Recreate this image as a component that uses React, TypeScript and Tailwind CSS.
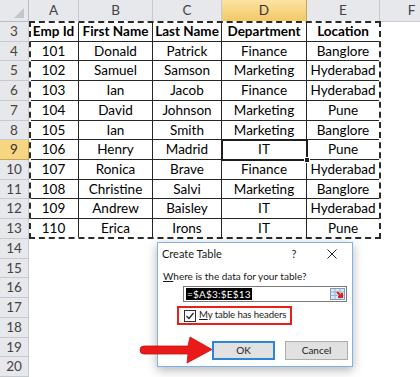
const COLS = ['A', 'B', 'C', 'D', 'E', 'F'];

const TABLE: string[][] = [
  ['Emp Id', 'First Name', 'Last Name', 'Department', 'Location'],
  ['101', 'Donald', 'Patrick', 'Finance', 'Banglore'],
  ['102', 'Samuel', 'Samson', 'Marketing', 'Hyderabad'],
  ['103', 'Ian', 'Jacob', 'Finance', 'Hyderabad'],
  ['104', 'David', 'Johnson', 'Marketing', 'Pune'],
  ['105', 'Ian', 'Smith', 'Marketing', 'Banglore'],
  ['106', 'Henry', 'Madrid', 'IT', 'Pune'],
  ['107', 'Ronica', 'Brave', 'Finance', 'Hyderabad'],
  ['108', 'Christine', 'Salvi', 'Marketing', 'Banglore'],
  ['109', 'Andrew', 'Baisley', 'IT', 'Hyderabad'],
  ['110', 'Erica', 'Irons', 'IT', 'Pune'],
];

const ROW_NUMBERS = Array.from({ length: 18 }, (_, i) => i + 3);

function ColumnHeader() {
  return (
    <>
      <div className="relative bg-[#e6e8eb] border-r border-b border-[#b9bdc3]">
        <svg className="absolute right-[3px] bottom-[3px]" width="11" height="10">
          <polygon points="10,0 10,10 0,10" fill="#c3c6ca" />
        </svg>
      </div>
      {COLS.map((c) => (
        <div
          key={c}
          className={
            c === 'D'
              ? 'flex items-center justify-center border-r border-b border-[#c9a352] bg-gradient-to-b from-[#fbe3a3] to-[#f3c865] text-[#333]'
              : 'flex items-center justify-center border-r border-b border-[#c6c9ce] bg-[#e6e8eb] text-[#444]'
          }
        >
          {c}
        </div>
      ))}
    </>
  );
}

function RangeIcon() {
  return (
    <svg width="15" height="12" viewBox="0 0 15 12">
      <rect x="0.5" y="0.5" width="14" height="11" fill="#dbe6f3" stroke="#7f9bbd" />
      <line x1="1" y1="4" x2="14" y2="4" stroke="#9fb4cf" />
      <line x1="1" y1="7.5" x2="14" y2="7.5" stroke="#9fb4cf" />
      <line x1="5" y1="1" x2="5" y2="11" stroke="#9fb4cf" />
      <line x1="10" y1="1" x2="10" y2="11" stroke="#9fb4cf" />
      <path d="M7 4 L12 9 M12 5 L12 9 L8 9" stroke="#d8241f" strokeWidth="2" fill="none" />
    </svg>
  );
}

function CreateTableDialog() {
  return (
    <div className="absolute left-[157px] top-[242px] w-[196px] h-[125px] bg-white border border-[#7fb2e5] shadow-[0_3px_10px_rgba(0,0,0,0.3)] font-['Lato',sans-serif] text-[10px] text-[#1a1a1a]">
      <div className="flex items-center h-[22px] pl-[4px]">
        <span className="text-[11px]">Create Table</span>
        <span className="ml-auto w-[30px] text-center text-[11px]">?</span>
        <span className="ml-[8px] mr-[5px] w-[30px] flex justify-center">
          <svg width="10" height="10" viewBox="0 0 10 10">
            <path d="M0.5 0.5 L9.5 9.5 M9.5 0.5 L0.5 9.5" stroke="#222" strokeWidth="1" />
          </svg>
        </span>
      </div>
      <div className="pl-[5px] mt-[4px] leading-[14px]">
        <span className="underline">W</span>here is the data for your table?
      </div>
      <div className="ml-[25px] mt-[3px] w-[164px] h-[16px] border border-[#7a7a7a] flex items-center pl-[2px] pr-[1px]">
        <span className="bg-black text-white text-[10px] leading-[12px] px-[1px] tracking-[0.2px]">=$A$3:$E$13</span>
        <span className="ml-auto flex">
          <RangeIcon />
        </span>
      </div>
      <div className="ml-[19px] mt-[4px] w-[115px] h-[19px] border-2 border-[#e8201c] flex items-center pl-[5px] gap-[3px] whitespace-nowrap">
        <svg className="shrink-0" width="12" height="12" viewBox="0 0 12 12">
          <rect x="0.5" y="0.5" width="11" height="11" fill="#fff" stroke="#333" />
          <path d="M2.5 6 L5 8.5 L9.5 3" stroke="#222" strokeWidth="1.2" fill="none" />
        </svg>
        <span className="text-[9.6px] tracking-[-0.1px]">
          <span className="underline">M</span>y table has headers
        </span>
      </div>
      <div className="flex mt-[16px] pl-[54px] gap-[10px]">
        <div className="w-[63px] h-[19px] bg-[#e1e1e1] border-2 border-[#2b86d8] flex items-center justify-center">OK</div>
        <div className="w-[63px] h-[19px] bg-[#e1e1e1] border border-[#adadad] flex items-center justify-center">Cancel</div>
      </div>
    </div>
  );
}

function RedArrow() {
  return (
    <svg className="absolute left-[136px] top-[334px]" width="80" height="32" viewBox="0 0 80 32">
      <path
        d="M8 12 L52 12 L54 3 L76 15.5 L51 29 L52 20 L8 20 A4 4 0 0 1 8 12 Z"
        fill="#ea1a1a"
        stroke="#c81010"
        strokeWidth="0.8"
      />
    </svg>
  );
}

export default function App() {
  return (
    <div className="relative w-[420px] h-[377px] overflow-hidden bg-white font-['Lato',sans-serif] text-[13.5px] text-black">
      <div className="grid grid-cols-[29px_50px_74px_69px_85px_73px_64px] grid-rows-[22px_20px_19px_20px_20px_20px_19px_20px_20px_19px_20px_20px_20px_19px_20px_20px_20px_19px_20px]">
        <ColumnHeader />
        {ROW_NUMBERS.map((r) => {
          const data = TABLE[r - 3];
          return [
            <div
              key={`h${r}`}
              className={
                r === 9
                  ? 'flex items-center justify-center border-r border-b border-[#c9a352] bg-[#f7d683] text-[#333]'
                  : 'flex items-center justify-center border-r border-b border-[#c6c9ce] bg-[#e6e8eb] text-[#444]'
              }
            >
              {r}
            </div>,
            ...COLS.map((c, ci) =>
              data && ci < 5 ? (
                <div
                  key={`${c}${r}`}
                  className={
                    r === 3
                      ? 'flex items-center justify-center border-r border-b border-[#262626] font-bold'
                      : 'flex items-center justify-center border-r border-b border-[#262626]'
                  }
                >
                  {data[ci]}
                </div>
              ) : (
                <div key={`${c}${r}`} />
              )
            ),
          ];
        })}
      </div>

      {/* copy marquee around A3:E13 */}
      <div className="absolute left-[29px] top-[21px] w-[352px] h-[218px] border-2 border-white" />
      <div className="absolute left-[29px] top-[21px] w-[352px] h-[218px] border-2 border-dashed border-[#2a2a2a]" />

      {/* active cell D9 */}
      <div className="absolute left-[221px] top-[139px] w-[87px] h-[22px] border-2 border-[#1f1f1f]" />
      <div className="absolute left-[304px] top-[157px] w-[6px] h-[6px] bg-[#1f1f1f] border border-white" />

      <CreateTableDialog />
      <RedArrow />
    </div>
  );
}
